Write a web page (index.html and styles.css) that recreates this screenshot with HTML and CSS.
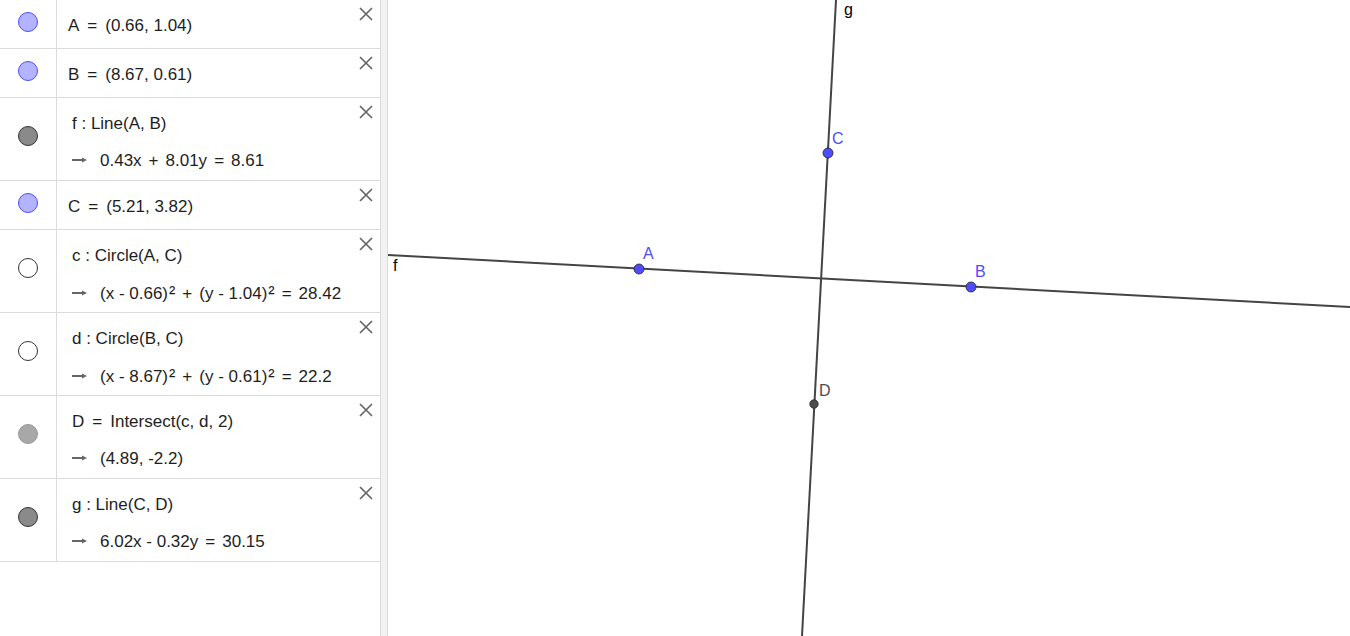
FILE: index.html
```html
<!DOCTYPE html>
<html>
<head>
<meta charset="utf-8">
<link rel="stylesheet" href="styles.css">
</head>
<body>
<div class="app">
  <aside class="algebra">
    <div class="row">
      <div class="marble-col"><span class="marble m-blue"></span></div>
      <div class="content"><div class="line">A<span class="op">=</span>(0.66, 1.04)</div></div>
      <button class="close" aria-label="delete"><svg viewBox="0 0 14 14"><path d="M1 1L13 13M13 1L1 13"/></svg></button>
    </div>
    <div class="row">
      <div class="marble-col"><span class="marble m-blue"></span></div>
      <div class="content"><div class="line">B<span class="op">=</span>(8.67, 0.61)</div></div>
      <button class="close" aria-label="delete"><svg viewBox="0 0 14 14"><path d="M1 1L13 13M13 1L1 13"/></svg></button>
    </div>
    <div class="row double">
      <div class="marble-col"><span class="marble m-dark"></span></div>
      <div class="content">
        <div class="line def">f : Line(A, B)</div>
        <div class="line val"><svg class="arrow" viewBox="0 0 16 8"><path d="M0 4H12"/><path class="head" d="M10 1.5L15 4L10 6.5Z"/></svg>0.43x<span class="op">+</span>8.01y<span class="op">=</span>8.61</div>
      </div>
      <button class="close" aria-label="delete"><svg viewBox="0 0 14 14"><path d="M1 1L13 13M13 1L1 13"/></svg></button>
    </div>
    <div class="row">
      <div class="marble-col"><span class="marble m-blue"></span></div>
      <div class="content"><div class="line">C<span class="op">=</span>(5.21, 3.82)</div></div>
      <button class="close" aria-label="delete"><svg viewBox="0 0 14 14"><path d="M1 1L13 13M13 1L1 13"/></svg></button>
    </div>
    <div class="row double">
      <div class="marble-col"><span class="marble m-open"></span></div>
      <div class="content">
        <div class="line def">c : Circle(A, C)</div>
        <div class="line val"><svg class="arrow" viewBox="0 0 16 8"><path d="M0 4H12"/><path class="head" d="M10 1.5L15 4L10 6.5Z"/></svg>(x - 0.66)<span class="sq">²</span><span class="op">+</span>(y - 1.04)<span class="sq">²</span><span class="op">=</span>28.42</div>
      </div>
      <button class="close" aria-label="delete"><svg viewBox="0 0 14 14"><path d="M1 1L13 13M13 1L1 13"/></svg></button>
    </div>
    <div class="row double">
      <div class="marble-col"><span class="marble m-open"></span></div>
      <div class="content">
        <div class="line def">d : Circle(B, C)</div>
        <div class="line val"><svg class="arrow" viewBox="0 0 16 8"><path d="M0 4H12"/><path class="head" d="M10 1.5L15 4L10 6.5Z"/></svg>(x - 8.67)<span class="sq">²</span><span class="op">+</span>(y - 0.61)<span class="sq">²</span><span class="op">=</span>22.2</div>
      </div>
      <button class="close" aria-label="delete"><svg viewBox="0 0 14 14"><path d="M1 1L13 13M13 1L1 13"/></svg></button>
    </div>
    <div class="row double">
      <div class="marble-col"><span class="marble m-light"></span></div>
      <div class="content">
        <div class="line def">D<span class="op">=</span>Intersect(c, d, 2)</div>
        <div class="line val"><svg class="arrow" viewBox="0 0 16 8"><path d="M0 4H12"/><path class="head" d="M10 1.5L15 4L10 6.5Z"/></svg>(4.89, -2.2)</div>
      </div>
      <button class="close" aria-label="delete"><svg viewBox="0 0 14 14"><path d="M1 1L13 13M13 1L1 13"/></svg></button>
    </div>
    <div class="row double">
      <div class="marble-col"><span class="marble m-dark"></span></div>
      <div class="content">
        <div class="line def">g : Line(C, D)</div>
        <div class="line val"><svg class="arrow" viewBox="0 0 16 8"><path d="M0 4H12"/><path class="head" d="M10 1.5L15 4L10 6.5Z"/></svg>6.02x - 0.32y<span class="op">=</span>30.15</div>
      </div>
      <button class="close" aria-label="delete"><svg viewBox="0 0 14 14"><path d="M1 1L13 13M13 1L1 13"/></svg></button>
    </div>
  </aside>
  <div class="splitter"></div>
  <main class="graphics">
    <svg class="canvas" viewBox="0 0 962 636" width="962" height="636">
      <line x1="0" y1="255" x2="962" y2="307" class="ln"/>
      <line x1="448" y1="0" x2="414" y2="636" class="ln"/>
      <text x="5" y="271" class="lbl">f</text>
      <text x="456" y="15" class="lbl">g</text>
      <circle cx="251" cy="269" r="5" class="pt-blue"/>
      <circle cx="583" cy="287" r="5" class="pt-blue"/>
      <circle cx="440" cy="153" r="5" class="pt-blue"/>
      <circle cx="426" cy="404" r="4.2" class="pt-dark"/>
      <text x="255" y="259" class="lbl blue">A</text>
      <text x="587" y="277" class="lbl blue">B</text>
      <text x="444" y="144" class="lbl blue">C</text>
      <text x="431" y="396" class="lbl dark">D</text>
    </svg>
  </main>
</div>
</body>
</html>
```

FILE: styles.css
```css
* { box-sizing: border-box; }
html, body { margin: 0; padding: 0; background: #fff; }
body { width: 1350px; height: 636px; overflow: hidden; font-family: "Liberation Sans", Arial, sans-serif; }

.app { display: flex; height: 636px; }

.algebra {
  width: 381px;
  flex: none;
  border-right: 1px solid #dcdcdc;
  background: #fff;
}

.row {
  display: flex;
  position: relative;
  border-bottom: 1px solid #dcdcdc;
  height: 49px;
}
.row.double { height: 83px; }

.marble-col {
  width: 57px;
  flex: none;
  border-right: 1px solid #dcdcdc;
  display: flex;
  justify-content: center;
  padding-top: 12px;
  padding-right: 1px;
}
.row.double .marble-col { padding-top: 28px; }

.marble {
  width: 20px;
  height: 20px;
  border-radius: 50%;
  border: 1px solid #333;
  display: block;
}
.m-blue { background: #b3b3ff; border-color: #4d4dff; }
.m-dark { background: #8a8a8a; border-color: #333; }
.m-light { background: #a8a8a8; border-color: #999; }
.m-open { background: #fff; border-color: #333; }

.content {
  flex: 1;
  padding: 14px 0 0 11px;
  color: #1e1e1e;
  font-size: 17px;
}
.line { line-height: 24px; height: 24px; white-space: nowrap; }
.line.def { padding-left: 4px; }
.line.val { padding-left: 4px; margin-top: 13px; }
.op { margin: 0 8px; }
.val .op { margin: 0 7px; }
.sq { font-size: 19px; margin-left: 1px; }
.arrow {
  display: inline-block;
  width: 16px;
  height: 8px;
  margin-right: 12px;
  vertical-align: 2px;
}
.arrow path { stroke: #666; stroke-width: 2; fill: none; }
.arrow path.head { fill: #666; stroke: none; }

.close {
  position: absolute;
  top: 7px;
  right: 7px;
  width: 14px;
  height: 14px;
  padding: 0;
  border: 0;
  background: none;
}
.close svg { width: 14px; height: 14px; display: block; }
.close path { stroke: #666; stroke-width: 1.7; fill: none; }

.splitter {
  width: 7px;
  flex: none;
  background: #f2f2f2;
  border-right: 1px solid #dcdcdc;
}

.graphics { flex: 1; overflow: hidden; position: relative; }
.canvas { display: block; }
.ln { stroke: #444; stroke-width: 2; }
.pt-blue { fill: #4d4dff; stroke: #222; stroke-width: 0.8; }
.pt-dark { fill: #4d4d4d; stroke: #222; stroke-width: 0.8; }
.lbl { font-family: "Liberation Sans", Arial, sans-serif; font-size: 16px; fill: #000; }
.lbl.blue { fill: #4d4dff; }
.lbl.dark { fill: #4d4d4d; }
```
